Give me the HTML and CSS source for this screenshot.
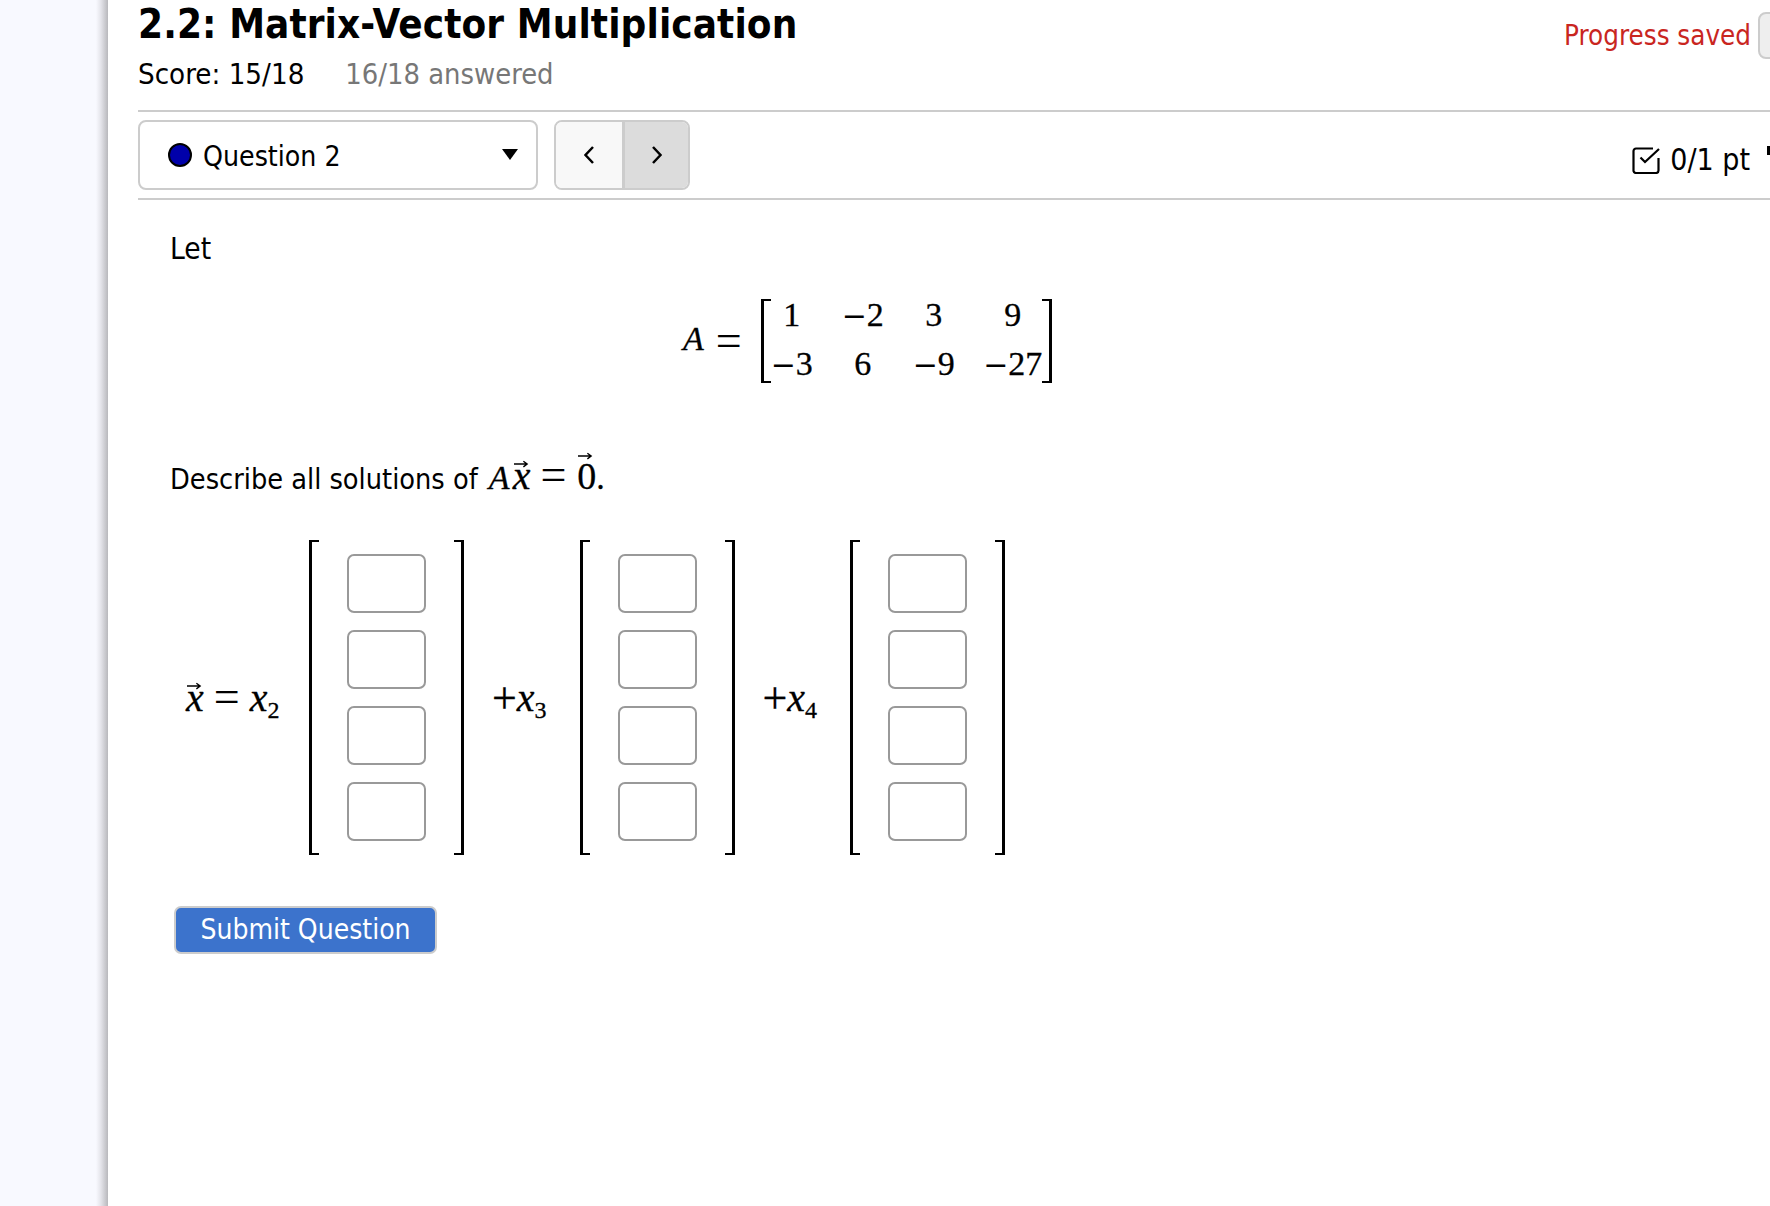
FILE: index.html
```html
<!DOCTYPE html>
<html lang="en">
<head>
<meta charset="utf-8">
<title>2.2: Matrix-Vector Multiplication</title>
<link rel="stylesheet" href="styles.css">
</head>
<body>
<div class="page">
  <aside class="side"></aside>
  <main class="main">
    <header class="head">
      <div class="head-left">
        <h1 class="title">2.2: Matrix-Vector Multiplication</h1>
        <div class="score"><span class="score-value">Score: 15/18</span><span class="answered">16/18 answered</span></div>
      </div>
      <div class="head-right">
        <span class="saved">Progress saved</span>
        <div class="save-btn"></div>
      </div>
    </header>
    <div class="toolbar">
      <div class="select">
        <span class="dot"></span>
        <span class="select-label">Question 2</span>
        <span class="caret"></span>
      </div>
      <div class="nav">
        <div class="nav-btn">
          <svg class="chev" viewBox="0 0 12 20"><path d="M10 2 2.500 10 10 18"/></svg>
        </div>
        <div class="nav-btn nav-next">
          <svg class="chev" viewBox="0 0 12 20"><path d="M2 2 9.500 10 2 18"/></svg>
        </div>
      </div>
      <div class="points">
        <svg class="check" viewBox="0 0 28 28"><path class="check-box" d="M21 2.500H4A2.500 2.500 0 0 0 1.500 5v20A2.500 2.500 0 0 0 4 27h20a2.500 2.500 0 0 0 2.500-2.500V12"/><path class="check-mark" d="M8.500 11.500 13 16 27 3"/></svg>
        <span>0/1 pt</span>
        <span class="flag"></span>
      </div>
    </div>
    <section class="question">
      <p class="let">Let</p>
      <div class="display">
        <span class="mi">A</span><span class="eq">=</span>
        <div class="matrix">
          <span class="bracket bracket-left"></span>
          <div class="cells">
            <span>1</span><span><span class="minus">−</span>2</span><span>3</span><span>9</span>
            <span><span class="minus">−</span>3</span><span>6</span><span><span class="minus">−</span>9</span><span><span class="minus">−</span>27</span>
          </div>
          <span class="bracket bracket-right"></span>
        </div>
      </div>
      <p class="describe">Describe all solutions of <span class="math describe-math"><span class="mi">A</span><span class="vec-sym mi">x<svg class="arrow" viewBox="0 0 16 8"><path d="M0 4h14M10 1l4 3-4 3"/></svg></span><span class="eq eq-inline">=</span><span class="vec-sym vec-zero">0<svg class="arrow" viewBox="0 0 16 8"><path d="M0 4h14M10 1l4 3-4 3"/></svg></span>.</span></p>
      <div class="answer">
        <div class="lead math"><span class="vec-sym mi">x<svg class="arrow" viewBox="0 0 16 8"><path d="M0 4h14M10 1l4 3-4 3"/></svg></span><span class="eq eq-inline">=</span><span class="mi">x</span><sub>2</sub></div>
        <div class="vector">
          <span class="bracket bracket-left"></span>
          <div class="inputs"><input type="text"><input type="text"><input type="text"><input type="text"></div>
          <span class="bracket bracket-right"></span>
        </div>
        <div class="plus math"><span class="op">+</span><span class="mi">x</span><sub>3</sub></div>
        <div class="vector">
          <span class="bracket bracket-left"></span>
          <div class="inputs"><input type="text"><input type="text"><input type="text"><input type="text"></div>
          <span class="bracket bracket-right"></span>
        </div>
        <div class="plus math"><span class="op">+</span><span class="mi">x</span><sub>4</sub></div>
        <div class="vector">
          <span class="bracket bracket-left"></span>
          <div class="inputs"><input type="text"><input type="text"><input type="text"><input type="text"></div>
          <span class="bracket bracket-right"></span>
        </div>
      </div>
      <button class="submit" type="button">Submit Question</button>
    </section>
  </main>
</div>
</body>
</html>
```
FILE: styles.css
```css
* { box-sizing: border-box; }
html, body { margin: 0; height: 100%; overflow: hidden; background: #fff; }
body { font-family: "DejaVu Sans", sans-serif; font-stretch: condensed; font-size: 28.6px; color: #000; }
.page { display: flex; height: 1206px; }
.side { width: 96px; flex: none; background: #f8f9ff; }
.main { flex: 1; min-width: 0; position: relative; background: #fff; padding-left: 42px; overflow: hidden; background-image: linear-gradient(90deg, #f8f9ff, #e4e4ea 40%, #b8b8bc); background-size: 12px 100%; background-repeat: no-repeat; }

.head { display: flex; justify-content: space-between; height: 112px; border-bottom: 2px solid #ccc; }
.title { margin: 0; font-size: 40px; font-weight: 700; line-height: 48px; letter-spacing: 0.1px; }
.score { display: flex; gap: 41px; margin-top: 6px; line-height: 40px; }
.score-value { font-size: 29.200px; }
.answered { color: #777; font-size: 28.800px; }
.head-right { display: flex; align-items: flex-start; margin-right: -40px; gap: 7px; padding-top: 12px; }
.saved { color: #c9261f; font-size: 27.500px; line-height: 47px; }
.save-btn { width: 52px; height: 47px; background: #eee; border: 2px solid #ccc; border-radius: 8px; }

.toolbar { display: flex; align-items: center; height: 88px; padding-top: 8px; padding-bottom: 9px; border-bottom: 2px solid #ccc; }
.select { width: 400px; height: 70px; display: flex; align-items: center; padding: 0 18px 0 28px; border: 2px solid #ccc; border-radius: 8px; font-size: 28.200px; }
.dot { width: 24px; height: 24px; border-radius: 50%; background: #0000aa; border: 2px solid #000; flex: none; }
.select-label { margin-left: 11px; padding-top: 4px; }
.caret { margin-left: auto; width: 0; height: 0; border-left: 8px solid transparent; border-right: 8px solid transparent; border-top: 11px solid #000; }
.nav { display: flex; height: 70px; margin-left: 16px; border: 2px solid #ccc; border-radius: 8px; overflow: hidden; }
.nav-btn { width: 66px; display: flex; align-items: center; justify-content: center; background: #f8f8f8; }
.nav-next { background: #dcdcdc; border-left: 3px solid #ccc; }
.chev { width: 12px; height: 20px; fill: none; stroke: #000; stroke-width: 2.500; }
.points { display: flex; align-items: center; margin-left: auto; margin-right: -7px; padding-top: 10px; font-size: 30px; }
.check { width: 28px; height: 28px; fill: none; stroke: #000; stroke-width: 2.200; margin-right: 10px; }
.flag { width: 10px; height: 9px; margin-left: 17px; margin-top: -18px; background: #000; }

.question { padding-left: 32px; }
.let { margin: 0; padding-top: 28px; line-height: 42px; font-size: 29.600px; }
.display { display: flex; align-items: center; margin: 29px 0 0 513px; font-family: "Liberation Serif", serif; font-size: 34px; font-stretch: normal; -webkit-text-stroke: 0.3px #000; }
.display > .mi { margin-top: -4px; }
.mi { font-family: "Liberation Serif", serif; font-style: italic; }
.eq { margin: 0 19px 0 12px; font-size: 46px; line-height: 0; -webkit-text-stroke: 0; }
.matrix { display: flex; height: 84px; }
.bracket { width: 10px; flex: none; border: 0 solid #000; border-top-width: 2px; border-bottom-width: 2px; }
.bracket-left { border-left-width: 3px; }
.bracket-right { border-right-width: 3px; }
.cells { display: grid; grid-template-columns: repeat(3, 40px) 56px; column-gap: 31px; justify-items: center; grid-auto-rows: 49px; padding: 0 1px; margin-top: -9px; line-height: 49px; white-space: nowrap; }
.minus { font-family: "DejaVu Serif", serif; font-size: 30px; -webkit-text-stroke: 0; line-height: 0; }
.math { font-family: "Liberation Serif", serif; font-size: 34px; font-stretch: normal; -webkit-text-stroke: 0.3px #000; }
.describe { margin: 73px 0 0; line-height: 44px; }
.describe-math { margin-left: 3px; }
.vec-sym { position: relative; display: inline-block; margin-left: 1px; font-size: 38px; line-height: 0; }
.vec-sym.mi { font-size: 40px; margin-left: 3px; }
.arrow { position: absolute; left: 1px; top: -16px; width: 15px; height: 8px; fill: none; stroke: #000; stroke-width: 1.500; }
.vec-zero .arrow { top: -24px; }
.eq-inline { margin: 0 10px; vertical-align: -1px; }
.answer { display: flex; align-items: center; margin-top: 39px; padding-left: 13px; }
.answer > .math > .mi:not(.vec-sym) { font-size: 40px; line-height: 0; }
.op { font-size: 44px; line-height: 0; vertical-align: -2px; }
.answer sub { font-size: 24px; line-height: 0; vertical-align: -7px; }
.lead { width: 126px; flex: none; padding-top: 5px; }
.vector { display: flex; height: 315px; }
.inputs { display: flex; flex-direction: column; gap: 17px; padding: 14px 28px; }
.inputs input { width: 79px; height: 59px; border: 2px solid #999; border-radius: 7px; background: #fff; padding: 0; }
.plus { width: 115.500px; flex: none; padding-left: 28px; padding-top: 5px; }
.submit { display: block; margin: 51px 0 0 4px; width: 263px; height: 48px; padding: 0; background: #3c73cc; color: #fff; border: 2px solid #ccc; border-radius: 7px; font-family: inherit; font-stretch: condensed; font-size: 28px; line-height: 40px; }
```
